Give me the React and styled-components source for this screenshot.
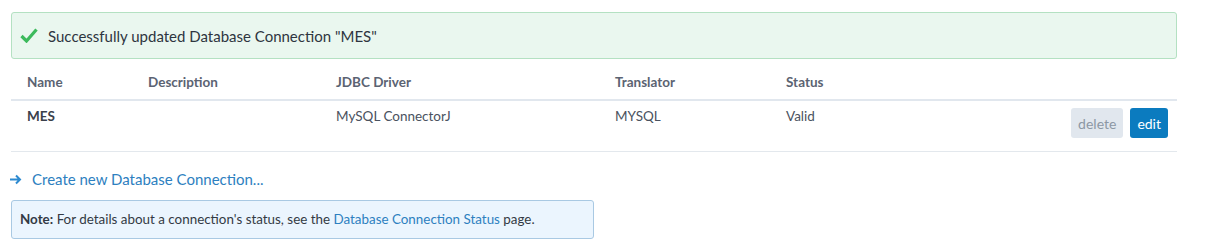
import React from 'react';
import styled, { createGlobalStyle } from 'styled-components';

const GlobalStyle = createGlobalStyle`
  html, body {
    margin: 0;
    padding: 0;
    background: #ffffff;
  }
  body {
    font-family: 'Lato', 'Liberation Sans', sans-serif;
    font-size: 14px;
    color: #333a44;
  }
`;

const Page = styled.div`
  width: 1166px;
  padding: 12px 0 0 11px;
`;

const Alert = styled.div`
  display: flex;
  align-items: center;
  gap: 10px;
  height: 45px;
  padding: 0 8px;
  background: #eaf7ef;
  border: 1px solid #b4e1c2;
  border-radius: 3px;
  font-size: 15px;
  color: #2e3540;
`;

const Table = styled.table`
  width: 100%;
  table-layout: fixed;
  border-collapse: collapse;
  margin-top: 1px;
`;

const HeadCell = styled.th`
  text-align: left;
  font-weight: 700;
  font-size: 13.5px;
  color: #5b6372;
  height: 34px;
  padding: 5px 0 0 ${p => p.$pad || 0}px;
  border-bottom: 2px solid #e1e7ee;
`;

const Cell = styled.td`
  vertical-align: top;
  font-size: 13.5px;
  font-weight: ${p => (p.$bold ? 700 : 400)};
  color: ${p => (p.$bold ? '#3a404a' : '#4a5260')};
  padding: 7px 0 0 ${p => p.$pad || 0}px;
  height: 43px;
  border-bottom: 1px solid #e3e8ed;
`;

const Actions = styled.div`
  display: flex;
  justify-content: flex-end;
  gap: 7px;
  padding-right: 9px;
`;

const Button = styled.button`
  font-family: inherit;
  font-size: 14px;
  height: 30px;
  padding: 0 7px;
  border: none;
  border-radius: 3px;
  background: ${p => (p.$primary ? '#0b7bbf' : '#e1e7ee')};
  color: ${p => (p.$primary ? '#ffffff' : '#8c97a4')};
`;

const CreateLink = styled.a`
  display: flex;
  align-items: center;
  gap: 10px;
  margin: 18px 0 0 -1px;
  font-size: 15px;
  color: #2d80c0;
  text-decoration: none;
`;

const Note = styled.div`
  width: 565px;
  margin-top: 12px;
  padding: 10px 8px 11px;
  background: #ebf5fe;
  border: 1px solid #a9c9e3;
  border-radius: 3px;
  font-size: 13.4px;
  color: #333a44;

  b {
    font-weight: 700;
  }
  a {
    color: #2d80c0;
    text-decoration: none;
  }
`;

const Check = () => (
  <svg width="18" height="15" viewBox="0 0 18 15">
    <path d="M1.5 8 L6.5 13 L16.5 1.5" fill="none" stroke="#3cba5c" strokeWidth="3.2" strokeLinejoin="miter" />
  </svg>
);

const Arrow = () => (
  <svg width="12" height="11" viewBox="0 0 12 11">
    <path d="M0 5.5 H10 M6 1.5 L10 5.5 L6 9.5" fill="none" stroke="#2d8ad0" strokeWidth="2" />
  </svg>
);

const columnWidths = [137, 188, 279, 171, 160, null];

export default function App() {
  return (
    <>
      <GlobalStyle />
      <Page>
        <Alert>
          <Check />
          Successfully updated Database Connection "MES"
        </Alert>
        <Table>
          <colgroup>
            {columnWidths.map((w, i) => (
              <col key={i} style={w ? { width: w } : undefined} />
            ))}
          </colgroup>
          <thead>
            <tr>
              <HeadCell $pad={16}>Name</HeadCell>
              <HeadCell>Description</HeadCell>
              <HeadCell>JDBC Driver</HeadCell>
              <HeadCell>Translator</HeadCell>
              <HeadCell>Status</HeadCell>
              <HeadCell />
            </tr>
          </thead>
          <tbody>
            <tr>
              <Cell $pad={16} $bold>MES</Cell>
              <Cell></Cell>
              <Cell>MySQL ConnectorJ</Cell>
              <Cell>MYSQL</Cell>
              <Cell>Valid</Cell>
              <Cell>
                <Actions>
                  <Button>delete</Button>
                  <Button $primary>edit</Button>
                </Actions>
              </Cell>
            </tr>
          </tbody>
        </Table>
        <CreateLink href="#">
          <Arrow />
          Create new Database Connection...
        </CreateLink>
        <Note>
          <b>Note:</b> For details about a connection's status, see the{' '}
          <a href="#">Database Connection Status</a> page.
        </Note>
      </Page>
    </>
  );
}
